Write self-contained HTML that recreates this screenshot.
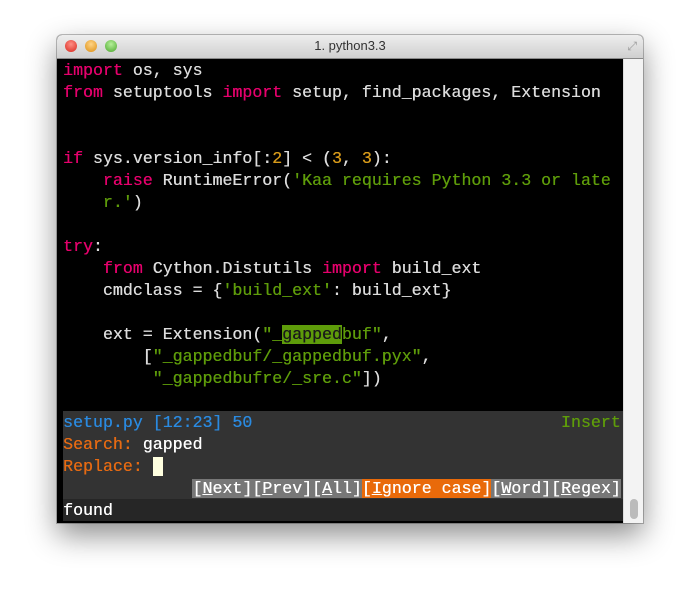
<!DOCTYPE html>
<html><head><meta charset="utf-8"><style>
body{margin:0;width:700px;height:603px;background:#fff;position:relative;overflow:hidden}
.win{position:absolute;left:57px;top:35px;width:586px;height:488px;background:#000;border-radius:5px 5px 0 0;box-shadow:0 12px 30px rgba(0,0,0,.45),0 0 0 1px rgba(0,0,0,.25);overflow:hidden}
.tb{position:absolute;left:0;top:0;width:586px;height:23px;background:linear-gradient(#eeeeee,#cfcfcf);border-bottom:1px solid #8a8a8a;font:13px "Liberation Sans",sans-serif;color:#333;text-align:center;line-height:22px}
.dot{position:absolute;top:5px;width:12px;height:12px;border-radius:50%}
.term{position:absolute;left:6px;top:24px;font:16.6px/22px "Liberation Mono",monospace;color:#dcdcdc;text-shadow:0.3px 0 0 currentColor}
.l{height:22px;width:560px;white-space:pre;padding-top:1px;box-sizing:border-box;line-height:21px}
.k{color:#e5006c}.n{color:#d79a1a}.s{color:#5e9c0a}.h{background:#5e9c0a;color:#1a1a1a}
.bar{background:#333}
.o{color:#e66a12}.b{color:#2a8ae0}.g{color:#5e9c0a}
.sb{position:absolute;left:566px;top:24px;width:20px;height:464px;background:#f3f3f3;border-left:1px solid #ddd}
.thumb{position:absolute;left:6px;top:440px;width:8px;height:20px;border-radius:4px;background:#bbb}
.btn{background:#777;color:#fff}.ign{background:#e96a0a;color:#fff}
u{text-decoration:underline}
</style></head><body>
<div class="win">
<div class="tb">1. python3.3
<div class="dot" style="left:8px;background:radial-gradient(circle at 50% 35%,#ff8f86,#d7271c)"></div>
<div class="dot" style="left:28px;background:radial-gradient(circle at 50% 35%,#ffd486,#dc8e12)"></div>
<div class="dot" style="left:48px;background:radial-gradient(circle at 50% 35%,#b6f09a,#4aa62c)"></div>
<span style="position:absolute;right:6px;top:0;color:#999;font-size:12px">⤢</span>
</div>
<div class="term"><div class="l"><span class="k">import</span> os, sys</div><div class="l"><span class="k">from</span> setuptools <span class="k">import</span> setup, find_packages, Extension</div><div class="l"></div><div class="l"></div><div class="l"><span class="k">if</span> sys.version_info[:<span class="n">2</span>] &lt; (<span class="n">3</span>, <span class="n">3</span>):</div><div class="l">    <span class="k">raise</span> RuntimeError(<span class="s">'Kaa requires Python 3.3 or late</span></div><div class="l"><span class="s">    r.'</span>)</div><div class="l"></div><div class="l"><span class="k">try</span>:</div><div class="l">    <span class="k">from</span> Cython.Distutils <span class="k">import</span> build_ext</div><div class="l">    cmdclass = {<span class="s">'build_ext'</span>: build_ext}</div><div class="l"></div><div class="l">    ext = Extension(<span class="s">"_</span><span class="h">gapped</span><span class="s">buf"</span>,</div><div class="l">        [<span class="s">"_gappedbuf/_gappedbuf.pyx"</span>,</div><div class="l">         <span class="s">"_gappedbufre/_sre.c"</span>])</div><div class="l"></div><div class="l bar"><span class="b">setup.py [12:23] 50</span>                               <span class="g">Insert</span></div><div class="l bar"><span class="o">Search:</span> <span style="color:#fff">gapped</span></div><div class="l bar"><span class="o">Replace:</span> <span style="background:#ffffe0"> </span></div><div class="l bar">             <span class="btn">[<u>N</u>ext][<u>P</u>rev][<u>A</u>ll]</span><span class="ign">[<u>I</u>gnore case]</span><span class="btn">[<u>W</u>ord][<u>R</u>egex]</span></div><div class="l" style="background:#262626;color:#fff">found</div></div>
<div class="sb"><div class="thumb"></div></div>
</div>
</body></html>
